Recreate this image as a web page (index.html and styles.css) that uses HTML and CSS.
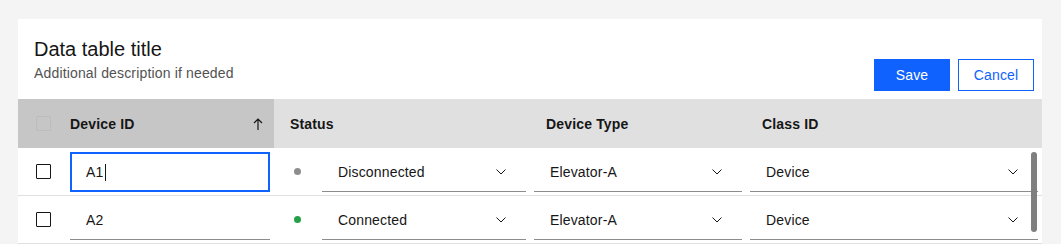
FILE: index.html
```html
<!DOCTYPE html>
<html>
<head>
<meta charset="utf-8">
<link rel="stylesheet" href="styles.css">
</head>
<body>
<div class="card">
  <div class="card-header">
    <div class="titles">
      <div class="title">Data table title</div>
      <div class="desc">Additional description if needed</div>
    </div>
    <div class="actions">
      <div class="btn btn-primary">Save</div>
      <div class="btn btn-ghost">Cancel</div>
    </div>
  </div>
  <div class="table">
    <div class="row head">
      <div class="cell check sorted"><span class="cb cb-disabled"></span></div>
      <div class="cell sorted th-id"><span>Device ID</span>
        <svg class="arrow" width="10" height="12" viewBox="0 0 10 12"><path d="M5 12V1.2M1 5L5 1L9 5" fill="none" stroke="#161616" stroke-width="1.2"/></svg>
      </div>
      <div class="cell th">Status</div>
      <div class="cell th">Device Type</div>
      <div class="cell th">Class ID</div>
    </div>
    <div class="tbody">
      <div class="row">
        <div class="cell check"><span class="cb"></span></div>
        <div class="cell pad"><div class="field focused">A1<span class="caret"></span></div></div>
        <div class="cell pad status"><span class="dot dot-gray"></span>
          <div class="select">Disconnected<svg class="chev" width="10" height="6" viewBox="0 0 10 6"><path d="M0.5 0.5L5 5L9.5 0.5" fill="none" stroke="#161616" stroke-width="1"/></svg></div>
        </div>
        <div class="cell pad"><div class="select">Elevator-A<svg class="chev" width="10" height="6" viewBox="0 0 10 6"><path d="M0.5 0.5L5 5L9.5 0.5" fill="none" stroke="#161616" stroke-width="1"/></svg></div></div>
        <div class="cell pad"><div class="select">Device<svg class="chev" width="10" height="6" viewBox="0 0 10 6"><path d="M0.5 0.5L5 5L9.5 0.5" fill="none" stroke="#161616" stroke-width="1"/></svg></div></div>
      </div>
      <div class="row">
        <div class="cell check"><span class="cb"></span></div>
        <div class="cell pad"><div class="field">A2</div></div>
        <div class="cell pad status"><span class="dot dot-green"></span>
          <div class="select">Connected<svg class="chev" width="10" height="6" viewBox="0 0 10 6"><path d="M0.5 0.5L5 5L9.5 0.5" fill="none" stroke="#161616" stroke-width="1"/></svg></div>
        </div>
        <div class="cell pad"><div class="select">Elevator-A<svg class="chev" width="10" height="6" viewBox="0 0 10 6"><path d="M0.5 0.5L5 5L9.5 0.5" fill="none" stroke="#161616" stroke-width="1"/></svg></div></div>
        <div class="cell pad"><div class="select">Device<svg class="chev" width="10" height="6" viewBox="0 0 10 6"><path d="M0.5 0.5L5 5L9.5 0.5" fill="none" stroke="#161616" stroke-width="1"/></svg></div></div>
      </div>
      <div class="scrollbar"></div>
    </div>
  </div>
</div>
</body>
</html>
```

FILE: styles.css
```css
* { box-sizing: border-box; }
html, body { margin: 0; }
body {
  background: #f4f4f4;
  padding: 19px 19px 0 18px;
  font-family: "Liberation Sans", Arial, sans-serif;
  color: #161616;
  overflow: hidden;
  height: 244px;
}
.card {
  width: 1024px;
  background: #fff;
}
.card-header {
  height: 80px;
  display: flex;
  justify-content: space-between;
  align-items: flex-end;
  padding: 16px 8px 8px 16px;
}
.titles { align-self: flex-start; }
.title {
  font-size: 20px;
  line-height: 28px;
  color: #161616;
}
.desc {
  font-size: 14px;
  line-height: 20px;
  color: #525252;
  letter-spacing: 0.16px;
}
.actions { display: flex; gap: 8px; }
.btn {
  width: 76px;
  height: 32px;
  display: flex;
  align-items: center;
  justify-content: center;
  font-size: 14px;
  letter-spacing: 0.16px;
}
.btn-primary { background: #0f62fe; color: #fff; }
.btn-ghost { border: 1px solid #0f62fe; color: #0f62fe; }

.row {
  display: grid;
  grid-template-columns: 48px 208px 256px 216px 296px;
  height: 48px;
  border-bottom: 1px solid #e0e0e0;
}
.row.head { background: #e0e0e0; border-bottom: 0; height: 49px; }
.cell {
  display: flex;
  align-items: center;
  font-size: 14px;
  letter-spacing: 0.16px;
}
.sorted { background: #c6c6c6; }
.check { padding-left: 18px; }
.th { padding-left: 16px; font-weight: bold; }
.th-id { padding: 0 11px 0 4px; font-weight: bold; justify-content: space-between; }
.arrow { display: block; }
.cb {
  width: 15px;
  height: 15px;
  border: 1px solid #161616;
  border-radius: 1px;
  background: #fff;
}
.cb-disabled { border-color: #bcbcbc; background: transparent; }

.tbody { position: relative; }
.tbody .row { align-items: center; }
.pad { padding: 0 4px; }
.field {
  width: 100%;
  height: 40px;
  display: flex;
  align-items: center;
  padding: 1px 0 0 16px;
  border-bottom: 1px solid #8d8d8d;
}
.field.focused {
  border: 2px solid #0f62fe;
  padding-left: 14px;
}
.caret {
  display: inline-block;
  width: 1px;
  height: 17px;
  background: #161616;
  margin-left: 2px;
}
.status { padding-left: 20px; }
.dot {
  width: 7px;
  height: 7px;
  border-radius: 50%;
  flex: none;
  margin-right: 21px;
}
.dot-gray { background: #8d8d8d; }
.dot-green { background: #24a148; }
.select {
  flex: 1;
  height: 40px;
  display: flex;
  align-items: center;
  justify-content: space-between;
  padding: 1px 20px 0 16px;
  border-bottom: 1px solid #8d8d8d;
}
.chev { display: block; }
.scrollbar {
  position: absolute;
  left: 1013px;
  top: 4px;
  width: 6px;
  height: 80px;
  border-radius: 3px;
  background: #7f7f7f;
}
```
